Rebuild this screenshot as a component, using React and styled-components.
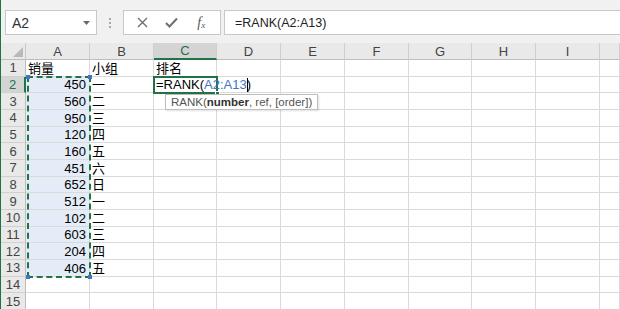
import React from 'react';
import styled, { createGlobalStyle } from 'styled-components';

const GREEN = '#217346';
const BLUE = '#4472c4';
const FONT = `"Liberation Sans", "Noto Sans CJK SC", sans-serif`;

const Global = createGlobalStyle`
  *, *::before, *::after { box-sizing: border-box; }
  html, body { margin: 0; padding: 0; background: #fff; overflow: hidden; }
  body { font-family: ${FONT}; }
`;

const Window = styled.div`
  width: 620px;
  height: 309px;
  overflow: hidden;
  border-left: 1px solid ${GREEN};
  display: flex;
  flex-direction: column;
  background: #fff;
`;

const Toolbar = styled.div`
  height: 43px;
  flex: none;
  background: #f1f1f1;
  display: flex;
  align-items: flex-start;
  padding: 10px 0 0 4px;
`;

const Box = styled.div`
  height: 25px;
  background: #fff;
  border: 1px solid #c8c8c8;
  display: flex;
  align-items: center;
`;

const NameBox = styled(Box)`
  width: 92px;
  padding: 0 6px;
  justify-content: space-between;
  font-size: 14px;
  color: #333;
`;

const Dots = styled.div`
  width: 26px;
  height: 25px;
  display: flex;
  flex-direction: column;
  align-items: center;
  justify-content: center;
  gap: 2px;
  span {
    width: 2px;
    height: 2px;
    background: #a8a8a8;
  }
`;

const ButtonGroup = styled(Box)`
  width: 98px;
  justify-content: space-around;
  padding: 0 4px;
`;

const IconButton = styled.div`
  width: 24px;
  height: 20px;
  display: flex;
  align-items: center;
  justify-content: center;
  color: #6b6b6b;
`;

const Fx = styled.span`
  font-family: "Liberation Serif", serif;
  font-style: italic;
  font-size: 14px;
  color: #555;
  sub {
    font-size: 9px;
    vertical-align: -1px;
  }
`;

const FormulaBox = styled(Box)`
  flex: 1;
  margin-left: 3px;
  border-right: none;
  padding-left: 10px;
  font-size: 12.5px;
  color: #222;
`;

const Grid = styled.div`
  flex: 1;
  display: grid;
  grid-template-columns: 25px 64px 64px 63px 64px 64px 64px 63px 64px 64px 1fr;
  grid-template-rows: 17px repeat(15, 16.667px);
  position: relative;
`;

const Placed = styled.div`
  grid-row: ${p => p.$row};
  grid-column: ${p => p.$col};
`;

const Corner = styled(Placed)`
  background: #e9e9e9;
  border-right: 1px solid #c9c9c9;
  border-bottom: 1px solid #bdbdbd;
  display: flex;
  align-items: flex-end;
  justify-content: flex-end;
  padding: 0 2px 2px 0;
`;

const ColHead = styled(Placed)`
  background: ${p => (p.$active ? '#d4d4d4' : '#e9e9e9')};
  color: ${p => (p.$active ? GREEN : '#444')};
  border-right: 1px solid #cfcfcf;
  border-bottom: ${p => (p.$active ? `2px solid ${GREEN}` : '1px solid #bdbdbd')};
  display: flex;
  align-items: center;
  justify-content: center;
  font-size: 13px;
`;

const RowHead = styled(Placed)`
  background: ${p => (p.$active ? '#d4d4d4' : '#e9e9e9')};
  color: ${p => (p.$active ? GREEN : '#444')};
  border-right: ${p => (p.$active ? `2px solid ${GREEN}` : '1px solid #bdbdbd')};
  border-bottom: 1px solid #d0d0d0;
  display: flex;
  align-items: center;
  justify-content: center;
  font-size: 13px;
`;

const Cell = styled(Placed)`
  background: ${p => (p.$sel ? '#e4ecf7' : '#fff')};
  border-right: 1px solid #dadada;
  border-bottom: 1px solid #dadada;
  font-size: 13px;
  line-height: 15px;
  color: #000;
  display: flex;
  align-items: flex-end;
  justify-content: ${p => (p.$num ? 'flex-end' : 'flex-start')};
  padding: 0 3px 0 2px;
  white-space: nowrap;
`;

const Marquee = styled.div`
  grid-column: 2;
  grid-row: 3 / 15;
  margin: -1px -1px -1px 1px;
  border: 2px dashed ${GREEN};
  position: relative;
  pointer-events: none;
`;

const Handle = styled.span`
  position: absolute;
  width: 4px;
  height: 4px;
  background: ${BLUE};
  ${p => (p.$top ? 'top: -3px;' : 'bottom: -3px;')}
  ${p => (p.$left ? 'left: -3px;' : 'right: -3px;')}
`;

const Editor = styled.div`
  grid-column: 4;
  grid-row: 3;
  margin: -1px;
  border: 2px solid ${GREEN};
  position: relative;
  font-size: 13px;
  line-height: 14px;
  white-space: nowrap;
  display: flex;
  align-items: flex-end;
  padding-left: 1px;
  z-index: 2;
`;

const FillHandle = styled.span`
  position: absolute;
  right: -4px;
  bottom: -4px;
  width: 5px;
  height: 5px;
  background: ${GREEN};
  border: 1px solid #fff;
`;

const Ref = styled.span`
  color: ${BLUE};
`;

const Caret = styled.span`
  display: inline-block;
  width: 1px;
  height: 14px;
  background: #000;
  margin-right: -1px;
  vertical-align: bottom;
`;

const Tip = styled.div`
  position: absolute;
  left: 10px;
  top: calc(100% + 2px);
  height: 16px;
  padding: 0 5px;
  background: #fff;
  border: 1px solid #bdbdbd;
  box-shadow: 1px 1px 2px rgba(0, 0, 0, 0.12);
  font-size: 11.5px;
  line-height: 14px;
  color: #555;
  white-space: nowrap;
  b {
    color: #333;
  }
`;

const COLS = ['A', 'B', 'C', 'D', 'E', 'F', 'G', 'H', 'I', ''];
const SALES = [450, 560, 950, 120, 160, 451, 652, 512, 102, 603, 204, 406];
const GROUPS = ['一', '二', '三', '四', '五', '六', '日', '一', '二', '三', '四', '五'];

function cellValue(r, c) {
  if (r === 1) {
    if (c === 0) return { text: '销量' };
    if (c === 1) return { text: '小组' };
    if (c === 2) return { text: '排名' };
    return { text: '' };
  }
  if (r >= 2 && r <= 13) {
    if (c === 0) return { text: String(SALES[r - 2]), num: true, sel: true };
    if (c === 1) return { text: GROUPS[r - 2] };
  }
  return { text: '' };
}

export default function App() {
  const rows = Array.from({ length: 15 }, (_, i) => i + 1);
  return (
    <>
      <Global />
      <Window>
        <Toolbar>
          <NameBox>
            <span>A2</span>
            <svg width="7" height="4" viewBox="0 0 7 4">
              <path d="M0 0h7L3.5 4z" fill="#6b6b6b" />
            </svg>
          </NameBox>
          <Dots>
            <span />
            <span />
            <span />
          </Dots>
          <ButtonGroup>
            <IconButton>
              <svg width="11" height="11" viewBox="0 0 11 11">
                <path d="M1 1l9 9M10 1l-9 9" stroke="#6e6e6e" strokeWidth="1.4" fill="none" />
              </svg>
            </IconButton>
            <IconButton>
              <svg width="13" height="11" viewBox="0 0 13 11">
                <path d="M1 6l3.5 3.5L12 1.5" stroke="#6e6e6e" strokeWidth="2" fill="none" />
              </svg>
            </IconButton>
            <IconButton>
              <Fx>
                f<sub>x</sub>
              </Fx>
            </IconButton>
          </ButtonGroup>
          <FormulaBox>=RANK(A2:A13)</FormulaBox>
        </Toolbar>
        <Grid>
          <Corner $row={1} $col={1}>
            <svg width="10" height="10" viewBox="0 0 10 10">
              <path d="M10 0v10H0z" fill="#b9b9b9" />
            </svg>
          </Corner>
          {COLS.map((c, i) => (
            <ColHead key={'h' + i} $row={1} $col={i + 2} $active={c === 'C'}>
              {c}
            </ColHead>
          ))}
          {rows.map(r => (
            <React.Fragment key={r}>
              <RowHead $row={r + 1} $col={1} $active={r === 2}>
                {r}
              </RowHead>
              {COLS.map((_, c) => {
                const v = cellValue(r, c);
                return (
                  <Cell key={c} $row={r + 1} $col={c + 2} $num={v.num} $sel={v.sel}>
                    {v.text}
                  </Cell>
                );
              })}
            </React.Fragment>
          ))}
          <Marquee>
            <Handle $top $left />
            <Handle $top />
            <Handle $left />
            <Handle />
          </Marquee>
          <Editor>
            <span>
              =RANK(<Ref>A2:A13</Ref>
              <Caret />)
            </span>
            <FillHandle />
            <Tip>
              RANK(<b>number</b>, ref, [order])
            </Tip>
          </Editor>
        </Grid>
      </Window>
    </>
  );
}
